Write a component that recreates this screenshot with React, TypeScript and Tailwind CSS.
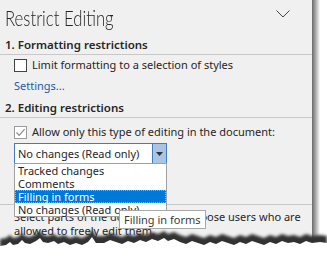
import React from "react";

const font = { fontFamily: '"Noto Sans", "Open Sans", "Liberation Sans", sans-serif' };

function Tear() {
  const pts: [number, number][] = [
    [0, 15], [6, 14], [10, 11], [13, 14], [18, 13], [22, 9], [25, 12], [30, 13], [36, 10], [40, 7], [43, 11],
    [48, 12], [54, 10], [58, 13], [64, 11], [70, 14], [76, 12], [82, 14], [88, 11], [92, 6], [96, 12], [104, 12],
    [110, 9], [116, 11], [122, 13], [128, 10], [134, 12], [140, 9], [146, 11], [152, 8], [158, 10], [164, 7], [168, 10],
    [174, 8], [180, 11], [186, 13], [192, 10], [198, 12], [204, 14], [210, 11], [216, 13], [222, 10], [228, 12],
    [234, 14], [240, 11], [246, 13], [252, 10], [258, 12], [264, 14], [270, 11], [276, 13], [282, 10], [288, 12],
    [294, 11], [300, 13], [306, 10], [312, 12], [320, 11], [327, 12],
  ];
  const edge = pts.map(([x, y]) => `${x},${y}`).join(" L");
  const d = `M${edge} L327,40 L0,40 Z`;
  const shadow = pts.map(([x, y]) => `${x},${y + 7}`).join(" L");
  const ds = `M${shadow} L327,40 L0,40 Z`;
  return (
    <svg className="absolute left-0 bottom-0 z-30" width="327" height="40" viewBox="0 0 327 40">
      <defs>
        <filter id="b" x="-5%" y="-50%" width="110%" height="200%">
          <feGaussianBlur stdDeviation="1.8" />
        </filter>
      </defs>
      <path d={d} fill="#333333" filter="url(#b)" />
      <path d={ds} fill="#ffffff" />
    </svg>
  );
}

function Checkbox({ checked }: { checked?: boolean }) {
  return (
    <div
      className={`w-[13px] h-[13px] shrink-0 bg-white border ${checked ? "border-[#9a9a9a]" : "border-[#444444]"} flex items-center justify-center`}
    >
      {checked && (
        <svg width="11" height="11" viewBox="0 0 11 11">
          <path d="M1.5 5.5 L4.2 8.3 L9.6 2.2" fill="none" stroke="#8a8a8a" strokeWidth="1.2" />
        </svg>
      )}
    </div>
  );
}

export default function App() {
  return (
    <div className="w-[327px] h-[264px] bg-white relative overflow-hidden text-[#262626]" style={font}>
      <div className="flex h-[250px]">
        <div className="w-[312px] bg-[#f0f0f0] flex flex-col">
          <div className="flex items-start justify-between h-[37px]">
            <div
              className="ml-[5px] pt-[2px] text-[22px] leading-[32px] font-light text-[#262626] origin-left scale-x-[0.76] whitespace-nowrap"
              style={{ fontFamily: 'Lato, "Noto Sans", sans-serif' }}
            >
              Restrict Editing
            </div>
            <svg className="mt-[10px] mr-[22px]" width="14" height="8" viewBox="0 0 14 8">
              <path d="M0.5 0.5 L7 7 L13.5 0.5" fill="none" stroke="#444" strokeWidth="1" />
            </svg>
          </div>
          <div className="pl-[5px] text-[11.5px] leading-[16px] font-semibold border-b border-[#c8c8c8] pb-[1px]">
            1. Formatting restrictions
          </div>
          <div className="flex items-center gap-[5px] pl-[14px] mt-[3px] h-[14px] text-[11px] leading-[14px]">
            <Checkbox />
            <span>Limit formatting to a selection of styles</span>
          </div>
          <div className="pl-[14px] mt-[7px] text-[11px] leading-[14px] text-[#1f5aa6]">Settings...</div>
          <div className="pl-[5px] mt-[7px] text-[11.5px] leading-[16px] font-semibold border-b border-[#c8c8c8] pb-[1px]">
            2. Editing restrictions
          </div>
          <div className="flex items-center gap-[5px] pl-[14px] mt-[7px] h-[14px] text-[11px] leading-[14px]">
            <Checkbox checked />
            <span>Allow only this type of editing in the document:</span>
          </div>
          <div className="relative ml-[14px] mt-[4px] w-[153px] h-[21px] flex border border-[#3f7cc0] bg-white">
            <div className="flex-1 pl-[3px] text-[11px] leading-[19px]">No changes (Read only)</div>
            <div className="w-[14px] bg-[#a9c4e4] border-l border-[#3f7cc0] flex items-center justify-center">
              <svg width="7" height="4" viewBox="0 0 7 4">
                <path d="M0 0 L7 0 L3.5 4 Z" fill="#333" />
              </svg>
            </div>
            <div className="absolute left-[-1px] top-[19px] w-[153px] bg-white border border-[#a0a0a0] text-[11px] leading-[13px] z-10">
              <div className="pl-[3px] h-[13px]">Tracked changes</div>
              <div className="pl-[3px] h-[13px]">Comments</div>
              <div className="pl-[2px] h-[13px] bg-[#0078d7] text-white border border-dotted border-[#e8a050] leading-[11px]">Filling in forms</div>
              <div className="pl-[3px] h-[13px]">No changes (Read only)</div>
            </div>
          </div>
          <div className="mt-[40px] border-t border-[#c8c8c8]" />
          <div className="pl-[14px] pt-[5px] text-[11px] leading-[14px] w-[305px]">
            Select parts of the document and choose users who are allowed to freely edit them.
          </div>
        </div>
        <div className="w-[8px] bg-gradient-to-r from-[#6a6a6a] via-[#b0b0b0] to-white" />
      </div>
      <div className="absolute left-[119px] top-[210px] h-[19px] px-[4px] bg-white border border-[#a8a8a8] text-[11px] leading-[17px] text-[#3a3a3a] z-20">
        Filling in forms
      </div>
      <Tear />
    </div>
  );
}
